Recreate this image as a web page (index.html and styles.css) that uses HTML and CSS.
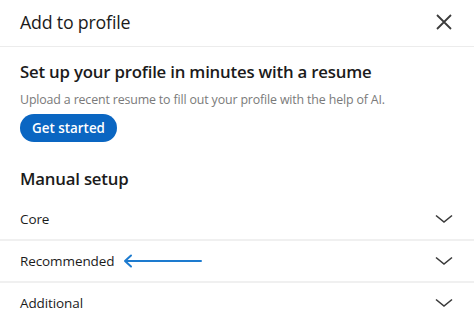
FILE: index.html
```html
<!DOCTYPE html>
<html lang="en">
<head>
<meta charset="utf-8">
<link rel="stylesheet" href="styles.css">
</head>
<body>
<div class="modal">
  <header class="modal-header">
    <h1 class="modal-title">Add to profile</h1>
    <button class="close-btn" aria-label="Close">
      <svg width="18" height="18" viewBox="0 0 18 18"><path d="M2 2 L16 16 M16 2 L2 16" stroke="#3c3c3c" stroke-width="1.8" fill="none"/></svg>
    </button>
  </header>
  <div class="modal-body">
    <section class="resume">
      <h2 class="section-title">Set up your profile in minutes with a resume</h2>
      <p class="section-sub">Upload a recent resume to fill out your profile with the help of AI.</p>
      <button class="primary-btn">Get started</button>
    </section>
    <h2 class="section-title manual">Manual setup</h2>
    <ul class="rows">
      <li class="row"><span class="row-label">Core</span><svg class="chev" width="18" height="10" viewBox="0 0 18 10"><path d="M1 1.5 L9 8 L17 1.5" stroke="#3a3a3a" stroke-width="1.6" fill="none"/></svg></li>
      <li class="row"><span class="row-label">Recommended</span><svg class="arrow" width="80" height="14" viewBox="0 0 80 14"><path d="M2 7 H78 M8 1.5 L2 7 L8 12.5" stroke="#1d7bcf" stroke-width="2" fill="none" stroke-linecap="round" stroke-linejoin="round"/></svg><svg class="chev" width="18" height="10" viewBox="0 0 18 10"><path d="M1 1.5 L9 8 L17 1.5" stroke="#3a3a3a" stroke-width="1.6" fill="none"/></svg></li>
      <li class="row"><span class="row-label">Additional</span><svg class="chev" width="18" height="10" viewBox="0 0 18 10"><path d="M1 1.5 L9 8 L17 1.5" stroke="#3a3a3a" stroke-width="1.6" fill="none"/></svg></li>
    </ul>
  </div>
</div>
</body>
</html>
```
FILE: styles.css
```css
* { box-sizing: border-box; }
html, body { margin: 0; padding: 0; background: #fff; }
body { font-family: "Open Sans", "Noto Sans", sans-serif; color: #191919; }
.modal { width: 474px; height: 322px; overflow: hidden; }
.modal-header {
  height: 47px;
  display: flex;
  align-items: center;
  justify-content: space-between;
  padding: 0 20px 2px 20px;
  border-bottom: 1px solid #ececec;
}
.modal-title { margin: 0; font-size: 17.8px; font-weight: 400; letter-spacing: -0.2px; color: #1b1b1b; }
.close-btn { border: 0; background: none; padding: 0; margin-right: 1px; display: flex; }
.modal-body { padding: 0 20px; }
.resume { padding-top: 13px; }
.section-title { margin: 0; font-size: 16.8px; font-weight: 600; line-height: 24px; letter-spacing: -0.2px; color: #1b1b1b; }
.section-sub { margin: 6px 0 0; font-size: 12.4px; line-height: 20px; color: #7a7a7a; letter-spacing: -0.15px; }
.primary-btn {
  margin-top: 4px;
  height: 28px;
  width: 97px;
  border: 0;
  border-radius: 14px;
  background: #0a66c2;
  color: #fff;
  font-family: inherit;
  font-size: 13.4px;
  font-weight: 600;
  padding: 0;
}
.manual { margin-top: 25px; }
.rows { list-style: none; margin: 8px -20px 0; padding: 0; }
.row {
  height: 42px;
  display: flex;
  align-items: center;
  padding: 0 20px;
  border-bottom: 2px solid #f0f0f0;
}
.row-label { font-size: 13.5px; color: #1b1b1b; letter-spacing: -0.1px; }
.arrow { margin-left: 9px; }
.chev { margin-left: auto; margin-right: 1px; }
```
